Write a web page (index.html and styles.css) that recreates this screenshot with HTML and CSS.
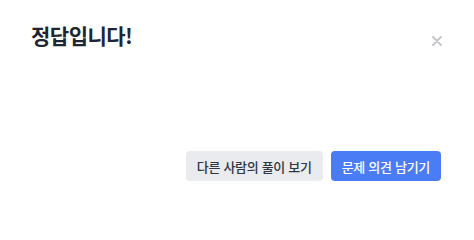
FILE: index.html
```html
<!DOCTYPE html>
<html lang="ko">
<head>
<meta charset="utf-8">
<link rel="stylesheet" href="styles.css">
</head>
<body>
<div class="modal">
  <div class="header">
    <h1 class="title">정답입니다!</h1>
    <button class="close" aria-label="닫기">
      <svg width="10" height="10" viewBox="0 0 10 10"><path d="M1 1L9 9M9 1L1 9" stroke="#c6c8cc" stroke-width="2" stroke-linecap="round"/></svg>
    </button>
  </div>
  <div class="footer">
    <button class="btn btn-gray">다른 사람의 풀이 보기</button>
    <button class="btn btn-blue">문제 의견 남기기</button>
  </div>
</div>
</body>
</html>
```
FILE: styles.css
```css
html, body {
  margin: 0;
  padding: 0;
  background: #ffffff;
}
body {
  font-family: "Noto Sans CJK KR", "Noto Sans", sans-serif;
  width: 474px;
  height: 211px;
}
.modal {
  box-sizing: border-box;
  height: 211px;
  padding: 21px 33px 30px 31px;
  display: flex;
  flex-direction: column;
  justify-content: space-between;
}
.header {
  display: flex;
  justify-content: space-between;
  align-items: flex-start;
}
.title {
  margin: 0;
  font-size: 21px;
  font-weight: 700;
  color: #1f2633;
  line-height: 28px;
  letter-spacing: -0.5px;
}
.close {
  border: 0;
  background: none;
  padding: 0;
  margin-top: 15px;
  margin-right: -1px;
  width: 10px;
  height: 10px;
  display: flex;
}
.footer {
  display: flex;
  justify-content: flex-end;
  gap: 8px;
}
.btn {
  border: 0;
  border-radius: 4px;
  height: 30px;
  padding: 0 11px;
  font-family: "Noto Sans CJK KR", sans-serif;
  font-size: 13px;
  font-weight: 500;
  letter-spacing: -0.3px;
}
.btn-gray {
  background: #e9ebef;
  color: #2f3743;
}
.btn-blue {
  background: #4a7cf5;
  color: #ffffff;
}
```
